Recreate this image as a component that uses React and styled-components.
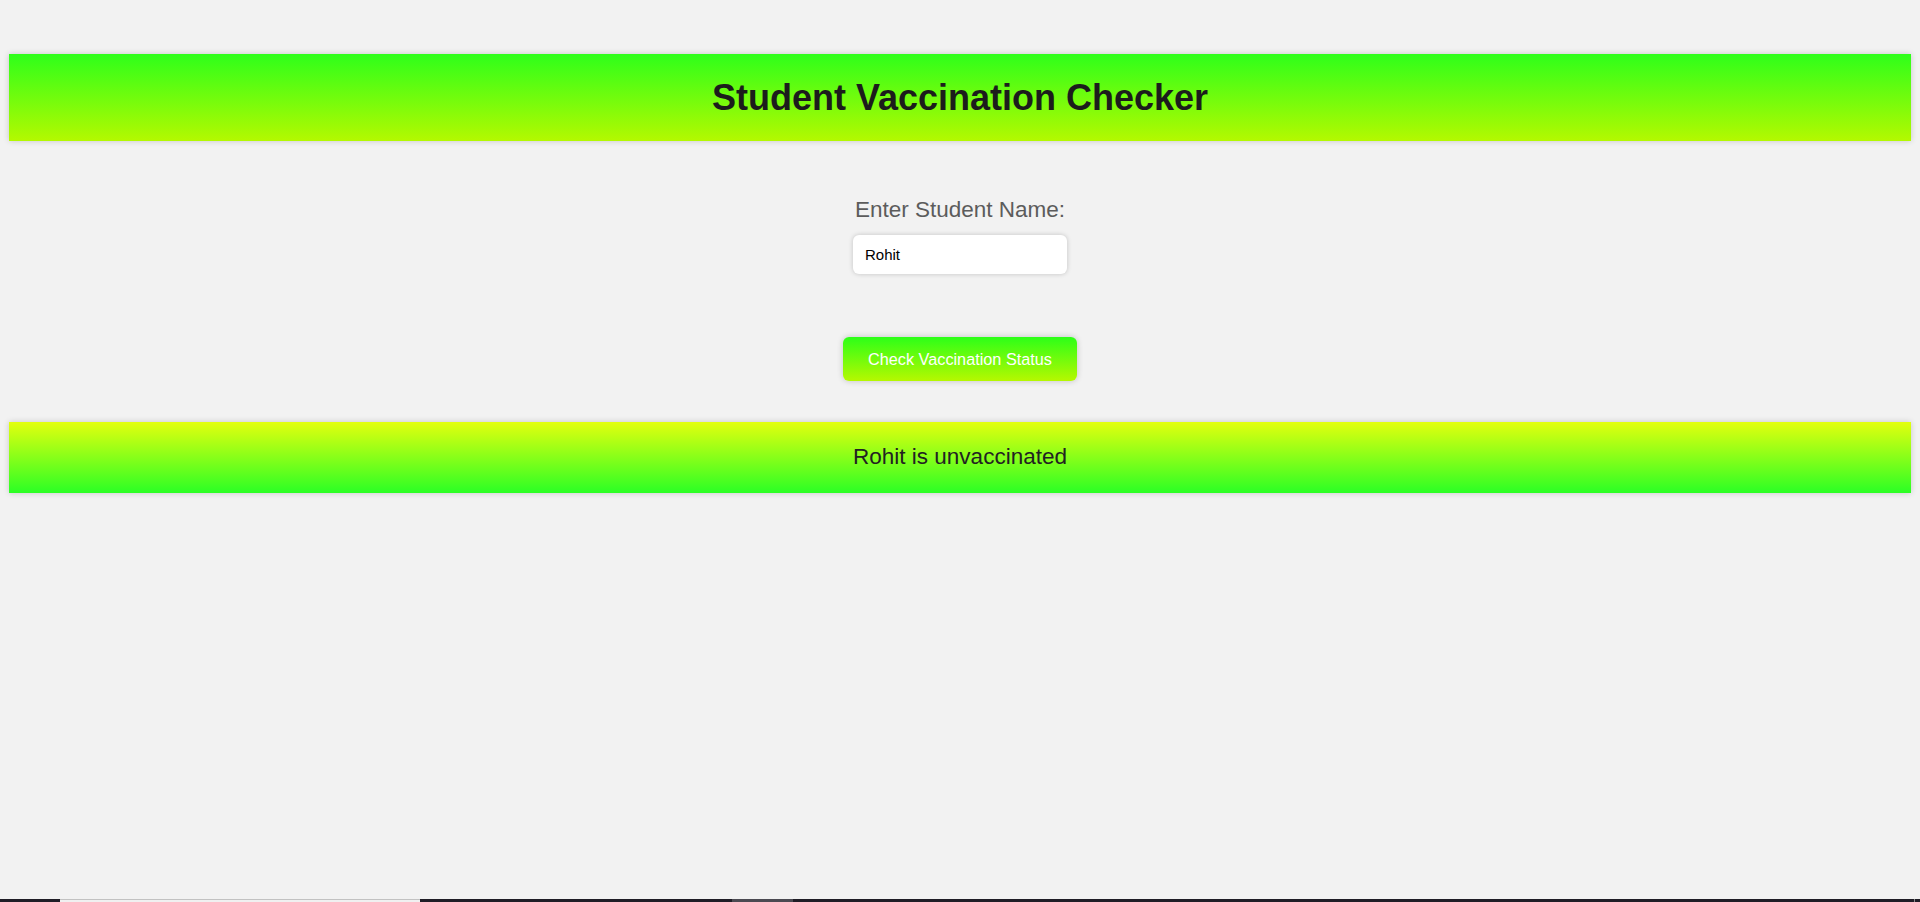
import React, { useState } from "react";
import styled, { createGlobalStyle } from "styled-components";

const GlobalStyle = createGlobalStyle`
  html, body {
    margin: 0;
    padding: 0;
    background: #f2f2f2;
    font-family: "Liberation Sans", Arial, sans-serif;
  }
`;

const Page = styled.div`
  min-height: 902px;
  height: 902px;
  display: flex;
  flex-direction: column;
  box-sizing: border-box;
  padding-top: 54px;
  overflow: hidden;
`;

const Content = styled.div`
  display: flex;
  flex-direction: column;
  align-items: center;
  padding: 0 9px;
`;

const Banner = styled.div`
  align-self: stretch;
  display: flex;
  align-items: center;
  justify-content: center;
  height: ${(p) => p.height};
  background: ${(p) => p.gradient};
  box-shadow: 0 0 6px rgba(0, 0, 0, 0.18);
`;

const Title = styled.h1`
  margin: 0;
  font-size: 36px;
  font-weight: 700;
  color: #1c1c1c;
  line-height: 40px;
`;

const Form = styled.div`
  display: flex;
  flex-direction: column;
  align-items: center;
  margin-top: 56px;
`;

const Label = styled.label`
  font-size: 22.5px;
  line-height: 25px;
  color: #5c5c5c;
`;

const NameInput = styled.input`
  margin-top: 13px;
  width: 214px;
  height: 39px;
  box-sizing: border-box;
  border: none;
  border-radius: 6px;
  padding: 0 12px;
  background: #fff;
  font-family: "Liberation Sans", Arial, sans-serif;
  font-size: 15px;
  color: #000;
  box-shadow: 0 0 5px rgba(0, 0, 0, 0.2);
  outline: none;
`;

const CheckButton = styled.button`
  margin-top: 63px;
  height: 44px;
  padding: 0 25px;
  border: none;
  border-radius: 6px;
  background: linear-gradient(to bottom, #2cff18, #b6f800);
  color: #fff;
  font-family: "Liberation Sans", Arial, sans-serif;
  font-size: 16.25px;
  box-shadow: 0 0 6px rgba(0, 0, 0, 0.2);
  cursor: pointer;
`;

const Result = styled(Banner)`
  margin-top: 41px;
  font-size: 22.5px;
  color: #222;
  padding-bottom: 2px;
  box-sizing: border-box;
`;

const Taskbar = styled.div`
  margin-top: auto;
  height: 3px;
  background: #1f1d26;
  display: flex;
`;

const TaskSlot = styled.div`
  width: ${(p) => p.width}px;
  margin-left: ${(p) => p.offset}px;
  background: ${(p) => p.bg};
  border-top: ${(p) => (p.edge ? "1px solid #c2c2c2" : "none")};
  box-sizing: border-box;
`;

export default function App() {
  const [name, setName] = useState("Rohit");
  const [status, setStatus] = useState("Rohit is unvaccinated");

  return (
    <>
      <GlobalStyle />
      <Page>
        <Content>
          <Banner
            height="87px"
            gradient="linear-gradient(to bottom, #2eff1a, #b4f900)"
          >
            <Title>Student Vaccination Checker</Title>
          </Banner>
          <Form>
            <Label htmlFor="student">Enter Student Name:</Label>
            <NameInput
              id="student"
              value={name}
              onChange={(e) => setName(e.target.value)}
            />
            <CheckButton
              onClick={() => setStatus(`${name} is unvaccinated`)}
            >
              Check Vaccination Status
            </CheckButton>
          </Form>
          <Result
            height="71px"
            gradient="linear-gradient(to bottom, #e3ff0e, #2bff25)"
          >
            {status}
          </Result>
        </Content>
        <Taskbar>
          <TaskSlot offset={60} width={360} bg="#f0f0f0" edge />
          <TaskSlot offset={312} width={61} bg="#4b4a52" />
          <TaskSlot offset={1121} width={1} bg="#8a8a8a" />
        </Taskbar>
      </Page>
    </>
  );
}
